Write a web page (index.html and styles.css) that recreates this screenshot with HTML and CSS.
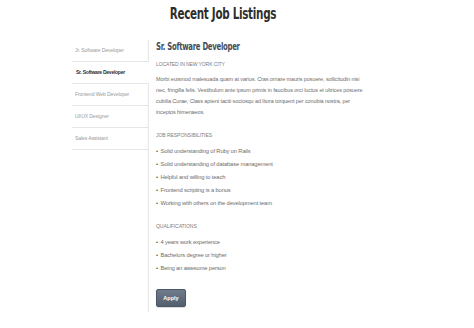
FILE: index.html
```html
<!DOCTYPE html>
<html>
<head>
<meta charset="utf-8">
<link rel="stylesheet" href="styles.css">
</head>
<body>
<div class="page">
  <h1 class="title"><span class="narrow narrow--title">Recent Job Listings</span></h1>
  <div class="layout">
    <ul class="tabs">
      <li class="tab">Jr. Software Developer</li>
      <li class="tab active">Sr. Software Developer</li>
      <li class="tab">Frontend Web Developer</li>
      <li class="tab">UI/UX Designer</li>
      <li class="tab">Sales Assistant</li>
    </ul>
    <div class="panel">
      <h2 class="job-title"><span class="narrow narrow--job">Sr. Software Developer</span></h2>
      <div class="location">LOCATED IN NEW YORK CITY</div>
      <p class="desc">Morbi euismod malesuada quam at varius. Cras ornare mauris posuere, sollicitudin nisi nec, fringilla felis. Vestibulum ante ipsum primis in faucibus orci luctus et ultrices posuere cubilia Curae; Class aptent taciti sociosqu ad litora torquent per conubia nostra, per inceptos himenaeos.</p>
      <div class="section-label">JOB RESPONSIBILITIES</div>
      <ul class="bullets">
        <li>Solid understanding of Ruby on Rails</li>
        <li>Solid understanding of database management</li>
        <li>Helpful and willing to teach</li>
        <li>Frontend scripting is a bonus</li>
        <li>Working with others on the development team</li>
      </ul>
      <div class="section-label section-label--qual">QUALIFICATIONS</div>
      <ul class="bullets">
        <li>4 years work experience</li>
        <li>Bachelors degree or higher</li>
        <li>Being an awesome person</li>
      </ul>
      <button class="apply">Apply</button>
    </div>
  </div>
</div>
</body>
</html>
```
FILE: styles.css
```css
* { box-sizing: border-box; }
html, body { margin: 0; padding: 0; background: #fff; }
body { font-family: "Liberation Sans", Arial, sans-serif; color: #6e6e6e; }

.page {
  margin-left: 72px;
  width: 302px;
}

.narrow {
  display: inline-block;
  white-space: nowrap;
}

.title {
  margin: 4px 0 0;
  height: 20px;
  line-height: 20px;
  font-family: "DejaVu Sans Condensed", sans-serif;
  font-weight: bold;
  font-size: 16px;
  letter-spacing: -0.4px;
  color: #2e2e2e;
  text-align: center;
}

.narrow--title {
  transform: scaleX(0.72);
  transform-origin: center;
}

.layout {
  display: flex;
  margin-top: 16px;
}

.tabs {
  list-style: none;
  margin: 0;
  padding: 0;
  width: 76px;
  flex: none;
}

.tab {
  height: 22px;
  line-height: 21px;
  padding-left: 3px;
  border-bottom: 1px solid #e6e6e6;
  font-size: 5.1px;
  letter-spacing: -0.12px;
  color: #9a9a9a;
  white-space: nowrap;
}

.tab.active {
  position: relative;
  z-index: 1;
  margin-right: -1px;
  background: #fff;
  color: #2e2e2e;
  font-weight: bold;
  letter-spacing: -0.3px;
  padding-left: 4px;
}

.panel {
  flex: 1;
  border-left: 1px solid #e9e9e9;
  box-shadow: -1px 0 2px rgba(0,0,0,0.03);
  padding: 0 0 5px 7px;
}

.job-title {
  margin: 0;
  height: 14px;
  line-height: 14px;
  font-family: "DejaVu Sans Condensed", sans-serif;
  font-weight: bold;
  font-size: 11px;
  letter-spacing: -0.4px;
  color: #454e5b;
}

.narrow--job {
  transform: scaleX(0.7);
  transform-origin: left;
}

.location {
  margin-top: 6px;
  line-height: 8px;
  font-size: 5.1px;
  letter-spacing: -0.15px;
  color: #7e7e7e;
}

.desc {
  margin: 6px 0 0;
  width: 210px;
  line-height: 11px;
  font-size: 5.5px;
  letter-spacing: -0.1px;
  color: #6e6e6e;
}

.section-label {
  margin-top: 13px;
  line-height: 8px;
  font-size: 5.1px;
  letter-spacing: -0.1px;
  color: #7e7e7e;
}

.section-label--qual { margin-top: 12px; }

.bullets {
  list-style: none;
  margin: 6px 0 0;
  padding: 0;
}

.bullets li {
  line-height: 13px;
  font-size: 5.8px;
  letter-spacing: -0.15px;
  color: #6e6e6e;
  display: flex;
}

.bullets li::before {
  content: "\2022";
  width: 4.5px;
  flex: none;
  color: #5a5a5a;
}

.apply {
  display: block;
  margin-top: 14px;
  width: 30px;
  height: 18px;
  padding: 0;
  border: 1px solid #4c5666;
  border-radius: 2px;
  background: linear-gradient(#6f7a8a, #535e6e);
  box-shadow: 0 1px 1px rgba(0,0,0,0.15);
  font-family: "Liberation Sans", Arial, sans-serif;
  font-size: 5.5px;
  font-weight: bold;
  color: #fff;
}
```
